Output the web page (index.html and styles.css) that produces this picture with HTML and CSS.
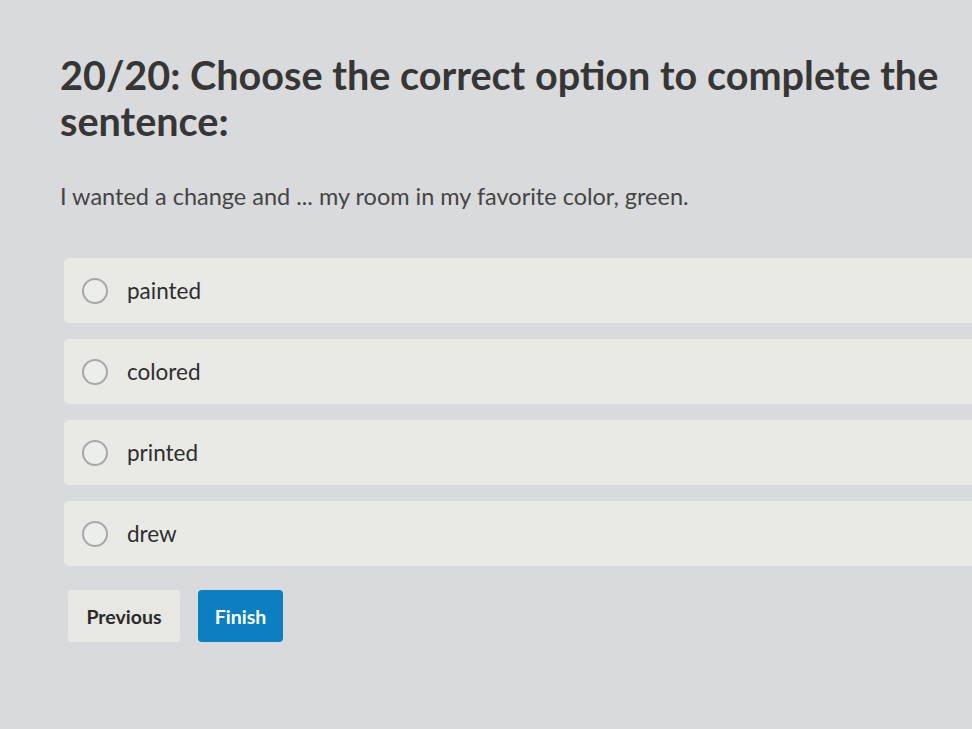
FILE: index.html
```html
<!DOCTYPE html>
<html lang="en">
<head>
  <meta charset="UTF-8" />
  <meta name="viewport" content="width=device-width, initial-scale=1.0">
  <title>Quiz 20/20</title>
  <link rel="stylesheet" href="styles.css">
</head>
<body>

  <div class="quiz">
    <h1>20/20: Choose the correct option to complete the sentence:</h1>

    <p class="question">I wanted a change and ... my room in my favorite color, green.</p>

    <!-- options -->
    <div class="options">
      <label class="option"><span class="radio"></span>painted</label>
      <label class="option"><span class="radio"></span>colored</label>
      <label class="option"><span class="radio"></span>printed</label>
      <label class="option"><span class="radio"></span>drew</label>
    </div>

    <!-- navigation -->
    <div class="nav">
      <button class="btn btn-prev">Previous</button>
      <button class="btn btn-finish">Finish</button>
    </div>
  </div>

</body>
</html>
```

FILE: styles.css
```css
html,
body {
  overflow-x: hidden;
}

body {
  font-family: Lato, 'Open Sans', sans-serif;
  margin: 0;
  background-color: #d9dadb;
  color: #343434;
}

.quiz {
  padding: 52px 0 80px 60px;
}

h1 {
  font-size: 39.6px;
  line-height: 46px;
  font-weight: 700;
  margin: 0;
  color: #363636;
}

.question {
  font-size: 23.5px;
  margin: 38px 0 0 0;
  color: #454545;
}

.options {
  margin: 48px -30px 0 4px;
  display: flex;
  flex-direction: column;
  gap: 16px;
}

.option {
  display: flex;
  align-items: center;
  height: 65px;
  background-color: #e9eae6;
  border-radius: 5px;
  font-size: 22.5px;
  color: #2e2e2e;
  padding-left: 18px;
}

.radio {
  width: 26px;
  height: 26px;
  border: 2px solid #a8a8a8;
  border-radius: 50%;
  box-sizing: border-box;
  margin-right: 19px;
  background-color: #eceeea;
}

.nav {
  display: flex;
  align-items: center;
  gap: 18px;
  margin: 24px 0 0 8px;
}

.btn {
  font-family: Lato, 'Open Sans', sans-serif;
  font-size: 19.5px;
  font-weight: 700;
  border: none;
  border-radius: 4px;
  height: 52px;
  cursor: pointer;
}

.btn-prev {
  background-color: #e7e7e3;
  color: #2a2a2a;
  width: 112px;
}

.btn-finish {
  background-color: #0b7fc0;
  color: #fff;
  width: 85px;
}
```
